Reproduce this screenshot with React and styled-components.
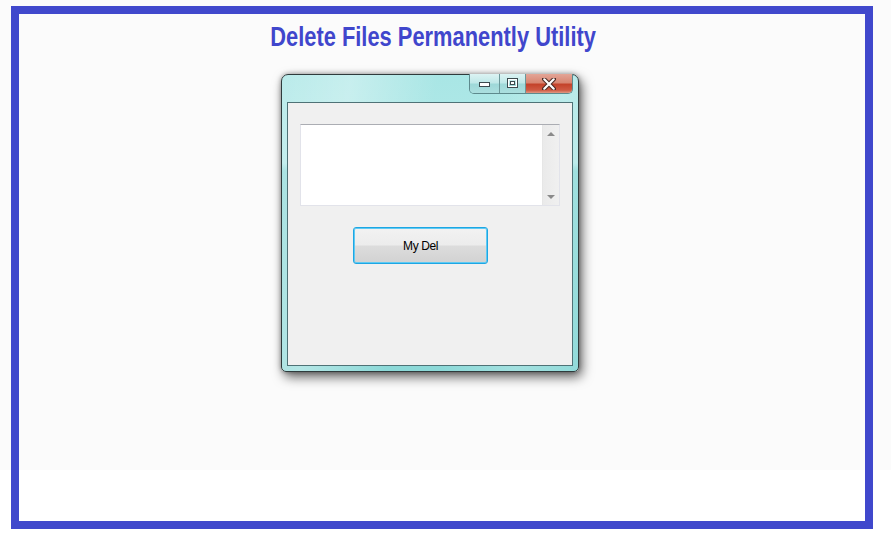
import React from 'react';
import styled, { createGlobalStyle } from 'styled-components';

const GlobalStyle = createGlobalStyle`
html, body {
  margin: 0;
  padding: 0;
}
body {
  width: 891px;
  height: 535px;
  overflow: hidden;
  background: linear-gradient(#fbfbfb 0, #fbfbfb 470px, #ffffff 470px);
  font-family: "Liberation Sans", Arial, sans-serif;
}
`

const Frame = styled.div`
margin: 6px 0 0 11px;
width: 862px;
height: 523px;
box-sizing: border-box;
border: 8px solid #4048cc;
display: flex;
flex-direction: column;
padding: 10px 0 0 262px;
`

const Column = styled.div`
width: 298px;
display: flex;
flex-direction: column;
align-items: center;
`

/* the original title is a narrow bold face; no narrow font here, so squeeze it */
const Title = styled.h1`
margin: 0 0 0 7px;
white-space: nowrap;
font-family: "Liberation Sans", Arial, sans-serif;
font-size: 27px;
line-height: 27px;
font-weight: 700;
color: #4046cc;
transform: scaleX(0.81);
`

const Window = styled.div`
margin-top: 23px;
width: 298px;
height: 298px;
box-sizing: border-box;
border: 1px solid #2f3b3c;
border-radius: 7px 7px 5px 5px;
padding: 0 5px 5px 5px;
display: flex;
flex-direction: column;
background:
  linear-gradient(100deg, rgba(255,255,255,0.2) 0%, rgba(255,255,255,0.35) 20%, rgba(255,255,255,0) 45%, rgba(255,255,255,0) 60%, rgba(255,255,255,0.2) 82%, rgba(255,255,255,0.05) 100%),
  linear-gradient(#a9e6e5 0, #b2e9e8 88px, #90dbda 96px, #8cd9d8 100%);
box-shadow: 3px 5px 12px rgba(0,0,0,0.6), 0 0 5px rgba(0,0,0,0.35);
`

const TitleBar = styled.div`
height: 27px;
display: flex;
justify-content: flex-end;
align-items: flex-start;
`

const CaptionGroup = styled.div`
display: flex;
height: 19px;
margin-top: -1px;
border: 1px solid #5d8a8d;
border-top: none;
border-radius: 0 0 5px 5px;
overflow: hidden;
`

const CaptionButton = styled.div`
width: ${p => p.$w}px;
height: 100%;
display: flex;
align-items: center;
justify-content: center;
box-sizing: border-box;
border-left: ${p => (p.$first ? 'none' : '1px solid #6b9799')};
background: ${p =>
  p.$close
    ? 'linear-gradient(#e3a597 0%, #d88672 45%, #c4432b 55%, #cf5a43 85%, #e09a85 100%)'
    : 'linear-gradient(#dcf3f3 0%, #c0e8e8 45%, #9ed8d8 55%, #abdfdf 100%)'};
`

const Client = styled.div`
flex: 1;
border: 1px solid #4f7276;
background: #f0f0f0;
padding: 21px 12px;
display: flex;
flex-direction: column;
align-items: flex-start;
`

const TextBox = styled.div`
width: 260px;
height: 82px;
box-sizing: border-box;
border: 1px solid #e2e3ea;
border-top-color: #abadb3;
background: #ffffff;
display: flex;
justify-content: flex-end;
`

const ScrollBar = styled.div`
width: 17px;
box-sizing: border-box;
border-left: 1px solid #e6e6e6;
background: linear-gradient(90deg, #eaeaea, #f0f0f0);
display: flex;
flex-direction: column;
justify-content: space-between;
align-items: center;
padding: 7px 0 6px;
`

const Arrow = styled.div`
width: 0;
height: 0;
border-left: 4px solid transparent;
border-right: 4px solid transparent;
${p => (p.$down ? 'border-top: 4px solid #8a8a8a;' : 'border-bottom: 4px solid #8a8a8a;')}
`

const Button = styled.button`
margin: 21px 0 0 53px;
width: 135px;
height: 37px;
padding: 0;
border: 1px solid #1ea6e3;
border-radius: 3px;
box-shadow: inset 0 0 0 1px #5fcaf3;
background: linear-gradient(#f2f2f2 0%, #ececec 48%, #dcdcdc 52%, #d2d2d2 100%);
font-family: "Liberation Sans", Arial, sans-serif;
font-size: 12px;
letter-spacing: -0.4px;
color: #000;
cursor: pointer;
`

function MinIcon() {
  return (
    <svg width="12" height="6" viewBox="0 0 12 6">
      <rect x="0.5" y="1.5" width="10" height="4" fill="#fff" stroke="#3c4a4e" />
    </svg>
  )
}

function MaxIcon() {
  return (
    <svg width="12" height="11" viewBox="0 0 12 11">
      <rect x="0.5" y="0.5" width="10" height="9" fill="none" stroke="#3c4a4e" />
      <rect x="1.5" y="1.5" width="8" height="7" fill="none" stroke="#fff" />
      <rect x="3.5" y="3.5" width="4" height="3" fill="#fff" stroke="#3c4a4e" />
    </svg>
  )
}

function CloseIcon() {
  return (
    <svg width="14" height="12" viewBox="0 0 14 12">
      <path d="M2 1 L12 11 M12 1 L2 11" stroke="#4a2a24" strokeWidth="4.2" strokeLinecap="round" />
      <path d="M2.3 1.3 L11.7 10.7 M11.7 1.3 L2.3 10.7" stroke="#ffffff" strokeWidth="2.2" strokeLinecap="round" />
    </svg>
  )
}

export default function App() {
  return (
    <>
      <GlobalStyle />
      <Frame>
        <Column>
          <Title>Delete Files Permanently Utility</Title>
          <Window>
            <TitleBar>
              <CaptionGroup>
                <CaptionButton $w={29} $first><MinIcon /></CaptionButton>
                <CaptionButton $w={26}><MaxIcon /></CaptionButton>
                <CaptionButton $w={47} $close><CloseIcon /></CaptionButton>
              </CaptionGroup>
            </TitleBar>
            <Client>
              <TextBox>
                <ScrollBar>
                  <Arrow />
                  <Arrow $down />
                </ScrollBar>
              </TextBox>
              <Button>My Del</Button>
            </Client>
          </Window>
        </Column>
      </Frame>
    </>
  )
}
